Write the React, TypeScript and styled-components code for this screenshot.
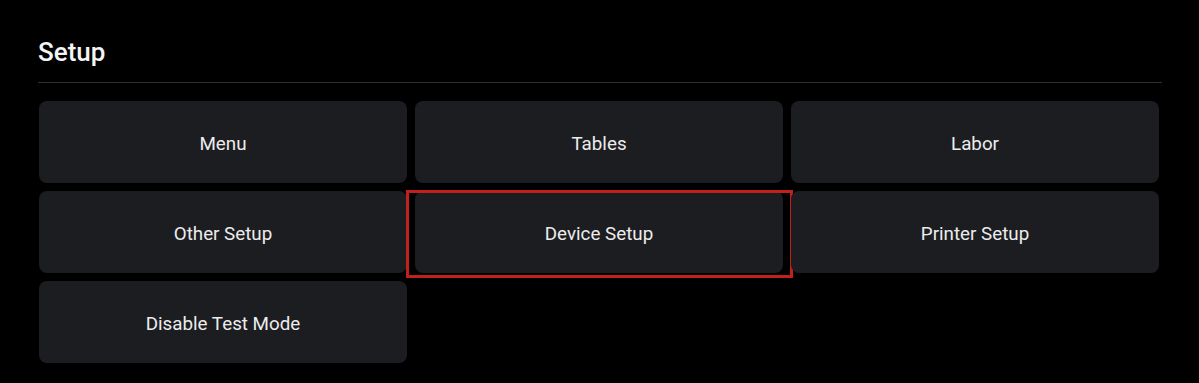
import React from "react";
import styled, { createGlobalStyle } from "styled-components";

const Global = createGlobalStyle`
  html, body {
    margin: 0;
    padding: 0;
    background: #000;
  }
  body {
    font-family: Roboto, "Noto Sans", "Liberation Sans", sans-serif;
    color: #f2f2f2;
  }
`;

const Page = styled.div`
  padding: 37px 37px 0 38px;
  width: 1124px;
`;

const Title = styled.h1`
  margin: 0;
  font-size: 26px;
  line-height: 30px;
  font-weight: 500;
  color: #f4f4f4;
`;

const Divider = styled.div`
  height: 1px;
  background: #2e2e30;
  margin-top: 15px;
`;

const Grid = styled.div`
  margin: 18px 3px 0 1px;
  display: grid;
  grid-template-columns: repeat(3, 368px);
  grid-auto-rows: 82px;
  gap: 8px;
`;

const Tile = styled.button`
  position: relative;
  border: none;
  margin: 0;
  padding: 3px 0 0;
  border-radius: 8px;
  background: #1c1d21;
  color: #ececec;
  font-family: Roboto, "Noto Sans", "Liberation Sans", sans-serif;
  font-size: 18.8px;
  font-weight: 400;
  display: flex;
  align-items: center;
  justify-content: center;
  cursor: pointer;
`;

const Highlight = styled.div`
  position: absolute;
  left: -9px;
  top: -1px;
  width: 381px;
  height: 82px;
  border: 3px solid #c2201b;
  pointer-events: none;
`;

const items = [
  "Menu",
  "Tables",
  "Labor",
  "Other Setup",
  "Device Setup",
  "Printer Setup",
  "Disable Test Mode",
];

export default function App() {
  return (
    <>
      <Global />
      <Page>
        <Title>Setup</Title>
        <Divider />
        <Grid>
          {items.map((label) => (
            <Tile key={label}>
              {label}
              {label === "Device Setup" && <Highlight />}
            </Tile>
          ))}
        </Grid>
      </Page>
    </>
  );
}
